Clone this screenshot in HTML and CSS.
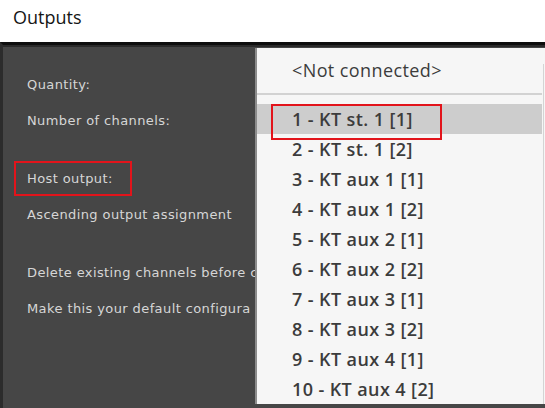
FILE: index.html
```html
<!DOCTYPE html>
<html>
<head>
<meta charset="utf-8">
<link rel="stylesheet" href="styles.css">
</head>
<body>
<div class="title">Outputs</div>
<div class="panel">
  <div class="labels">
    <div class="row">Quantity:</div>
    <div class="row gap-s">Number of channels:</div>
    <div class="row gap-l"><span class="hl">Host output:</span></div>
    <div class="row gap-s">Ascending output assignment</div>
    <div class="row gap-l">Delete existing channels before c</div>
    <div class="row gap-s">Make this your default configura</div>
  </div>
  <div class="dropdown">
    <div class="head">&lt;Not connected&gt;</div>
    <div class="sep"></div>
    <div class="item selected"><span class="mark">1 - KT st. 1 [1]</span></div>
    <div class="item">2 - KT st. 1 [2]</div>
    <div class="item">3 - KT aux 1 [1]</div>
    <div class="item">4 - KT aux 1 [2]</div>
    <div class="item">5 - KT aux 2 [1]</div>
    <div class="item">6 - KT aux 2 [2]</div>
    <div class="item">7 - KT aux 3 [1]</div>
    <div class="item">8 - KT aux 3 [2]</div>
    <div class="item">9 - KT aux 4 [1]</div>
    <div class="item">10 - KT aux 4 [2]</div>
  </div>
</div>
</body>
</html>
```
FILE: styles.css
```css
html, body {
  margin: 0;
  padding: 0;
  background: #ffffff;
  width: 545px;
  height: 408px;
  overflow: hidden;
}

.title {
  height: 42px;
  box-sizing: border-box;
  padding-left: 13px;
  line-height: 35px;
  font-family: "Open Sans", "Noto Sans", sans-serif;
  font-size: 18px;
  color: #151515;
}

.panel {
  position: relative;
  height: 366px;
  box-sizing: border-box;
  background: #464646;
  border-top: 3px solid #0e0e0e;
  border-left: 3px solid #2c2c2c;
  box-shadow: inset 0 2px 0 #2a2a2a;
  overflow: hidden;
}

.labels {
  width: 252px;
  box-sizing: border-box;
  overflow: hidden;
  padding-top: 30px;
  padding-left: 24px;
  font-family: "DejaVu Sans", sans-serif;
  font-size: 13px;
  letter-spacing: 0.4px;
  color: #d6d6d6;
  white-space: nowrap;
}

.row {
  height: 20px;
  line-height: 20px;
}

.gap-s { margin-top: 16px; }
.gap-l { margin-top: 38px; }

.hl {
  position: relative;
  display: inline-block;
}

.hl::after {
  content: "";
  position: absolute;
  left: -13px;
  top: -8px;
  width: 114px;
  height: 31px;
  border: 2px solid #e2141b;
}

.dropdown {
  position: absolute;
  left: 252px;
  top: 3px;
  width: 288px;
  height: 356px;
  background: #f6f6f6;
  border-left: 2px solid #8c8c8c;
  font-family: "Open Sans", "Noto Sans", sans-serif;
  font-weight: 600;
  font-size: 18px;
  letter-spacing: 0.4px;
  color: #3c3c3c;
}

.dropdown::after {
  content: "";
  position: absolute;
  left: 286px;
  top: 16px;
  bottom: 0;
  width: 1px;
  background: #d4d4d4;
}

.head {
  height: 45px;
  line-height: 45px;
  padding-left: 35px;
  font-weight: 500;
}

.sep {
  height: 2px;
  width: 285px;
  background: #d2d2d2;
  margin-bottom: 9px;
}

.item {
  width: 285px;
  box-sizing: border-box;
  height: 30px;
  line-height: 30px;
  padding-left: 35px;
  white-space: nowrap;
}

.item.selected {
  background: #cdcdcd;
}

.mark {
  position: relative;
}

.mark::after {
  content: "";
  position: absolute;
  left: -21px;
  top: -3px;
  width: 167px;
  height: 32px;
  border: 2px solid #e2141b;
}
```
